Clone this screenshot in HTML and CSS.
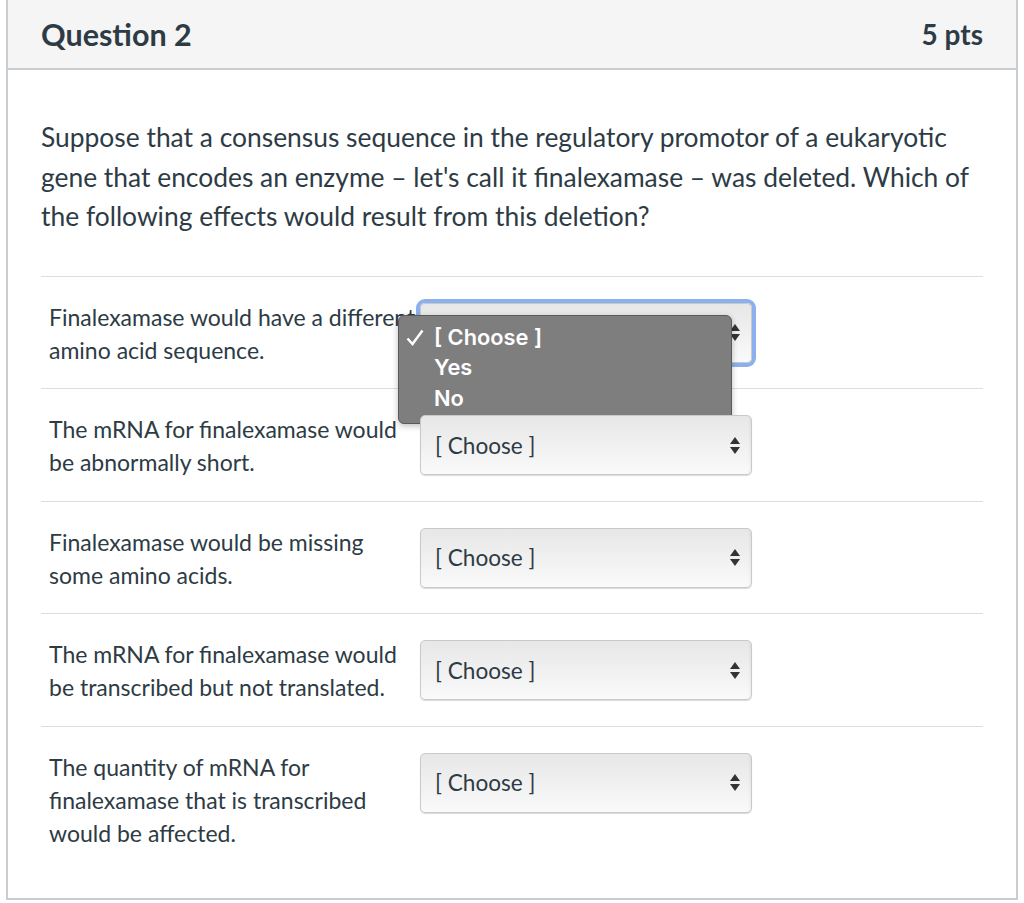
FILE: index.html
```html
<!DOCTYPE html>
<html lang="en">
<head>
    <meta charset="UTF-8">
    <meta name="viewport" content="width=device-width, initial-scale=1.0">
    <title>Question 2</title>
    <link rel="stylesheet" href="styles.css">
</head>
<body>
    <div class="question">
        <div class="question-header">
            <h2>Question 2</h2>
            <span class="points">5 pts</span>
        </div>

        <div class="question-body">
            <p class="question-text">Suppose that a consensus sequence in the regulatory promotor of a eukaryotic gene that encodes an enzyme – let's call it finalexamase – was deleted. Which of the following effects would result from this deletion?</p>

            <div class="answers">
                <div class="answer-row">
                    <div class="answer-label">Finalexamase would have a different amino acid sequence.</div>
                    <div class="select-wrap">
                        <div class="select focused">
                            <span>[ Choose ]</span>
                            <svg class="arrows" width="10" height="17" viewBox="0 0 10 17"><polygon points="5,0 10,7 0,7"/><polygon points="0,10 10,10 5,17"/></svg>
                        </div>
                        <ul class="dropdown">
                            <li>
                                <svg class="check" width="18" height="17" viewBox="0 0 18 17"><polyline points="1.5,9.5 6.5,15 16.5,1.5"/></svg>
                                [ Choose ]
                            </li>
                            <li>Yes</li>
                            <li>No</li>
                        </ul>
                    </div>
                </div>

                <div class="answer-row">
                    <div class="answer-label">The mRNA for finalexamase would be abnormally short.</div>
                    <div class="select-wrap">
                        <div class="select">
                            <span>[ Choose ]</span>
                            <svg class="arrows" width="10" height="17" viewBox="0 0 10 17"><polygon points="5,0 10,7 0,7"/><polygon points="0,10 10,10 5,17"/></svg>
                        </div>
                    </div>
                </div>

                <div class="answer-row">
                    <div class="answer-label">Finalexamase would be missing some amino acids.</div>
                    <div class="select-wrap">
                        <div class="select">
                            <span>[ Choose ]</span>
                            <svg class="arrows" width="10" height="17" viewBox="0 0 10 17"><polygon points="5,0 10,7 0,7"/><polygon points="0,10 10,10 5,17"/></svg>
                        </div>
                    </div>
                </div>

                <div class="answer-row">
                    <div class="answer-label">The mRNA for finalexamase would be transcribed but not translated.</div>
                    <div class="select-wrap">
                        <div class="select">
                            <span>[ Choose ]</span>
                            <svg class="arrows" width="10" height="17" viewBox="0 0 10 17"><polygon points="5,0 10,7 0,7"/><polygon points="0,10 10,10 5,17"/></svg>
                        </div>
                    </div>
                </div>

                <div class="answer-row">
                    <div class="answer-label">The quantity of mRNA for finalexamase that is transcribed would be affected.</div>
                    <div class="select-wrap">
                        <div class="select">
                            <span>[ Choose ]</span>
                            <svg class="arrows" width="10" height="17" viewBox="0 0 10 17"><polygon points="5,0 10,7 0,7"/><polygon points="0,10 10,10 5,17"/></svg>
                        </div>
                    </div>
                </div>
            </div>
        </div>
    </div>
</body>
</html>
```

FILE: styles.css
```css
body {
    margin: 0;
    font-family: Lato, "Open Sans", sans-serif;
    color: #2d3b45;
    background-color: #fff;
}

.question {
    margin: 0 6px;
    border: 2px solid #c7cdd1;
    border-top: none;
}

.question-header {
    height: 68px;
    background-color: #f5f5f5;
    border-bottom: 2px solid #c7cdd1;
    padding: 0 33px;
    display: flex;
    justify-content: space-between;
    align-items: center;
}

.question-header h2 {
    margin: 0;
    font-size: 30.5px;
    font-weight: bold;
}

.points {
    font-size: 28px;
    font-weight: bold;
}

.question-body {
    padding: 48px 33px 26.5px;
}

.question-text {
    margin: 0 0 39px;
    font-size: 26.4px;
    line-height: 39.6px;
}

.answer-row {
    display: flex;
    align-items: flex-start;
    border-top: 1px solid #dcdfe1;
    padding: 26px 0 21.5px;
}

.answer-label {
    width: 379px;
    box-sizing: border-box;
    margin-top: -2px;
    padding: 0 3px 0 8px;
    font-size: 23px;
    line-height: 33px;
    flex-shrink: 0;
}

.select-wrap {
    position: relative;
}

.select {
    width: 332px;
    height: 60px;
    box-sizing: border-box;
    display: flex;
    align-items: center;
    justify-content: space-between;
    padding: 0 11px 0 14px;
    border: 1px solid #c9c9c9;
    border-radius: 5px;
    background: linear-gradient(#e7e7e7, #f2f2f2 60%, #fafafa);
    box-shadow: 0 1px 1px rgba(0, 0, 0, 0.15), inset -3px 0 3px -2px rgba(0, 0, 0, 0.06);
    font-size: 22.6px;
}

.select.focused {
    box-shadow: 0 0 0 4px #8cb0ee;
}

.arrows {
    fill: #333;
}

.dropdown {
    position: absolute;
    left: -22px;
    top: 12px;
    width: 334px;
    box-sizing: border-box;
    margin: 0;
    padding: 6px 0 10px;
    list-style: none;
    background-color: #7e7e7f;
    border: 1px solid #5a5a5a;
    border-radius: 6px;
    box-shadow: 0 2px 6px rgba(0, 0, 0, 0.25);
    color: #fff;
    font-family: Inter, "Liberation Sans", sans-serif;
    font-weight: 600;
    font-size: 21.8px;
    line-height: 30.5px;
}

.dropdown li {
    padding-left: 35px;
    position: relative;
}

.check {
    position: absolute;
    left: 7px;
    top: 7px;
    fill: none;
    stroke: #fff;
    stroke-width: 2.4;
}
```
